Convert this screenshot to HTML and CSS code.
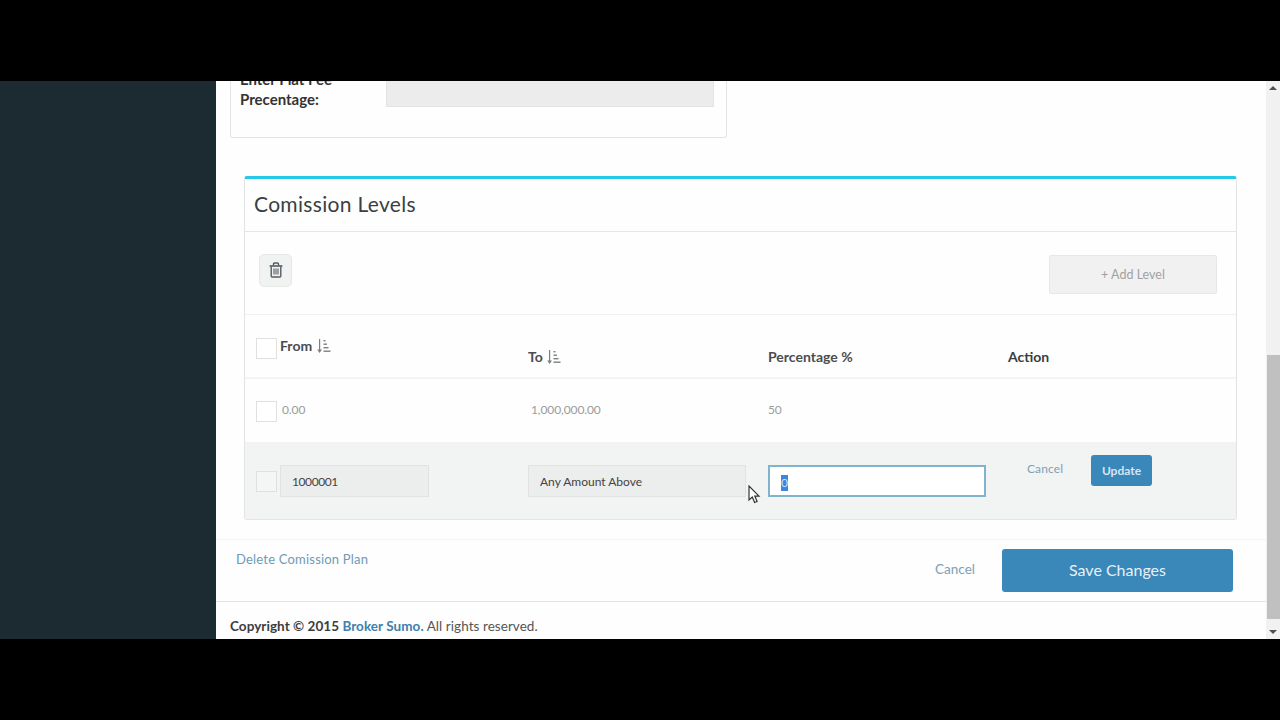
FILE: index.html
```html
<!DOCTYPE html>
<html lang="en">
<head>
<meta charset="utf-8">
<title>Comission Levels</title>
<link rel="stylesheet" href="styles.css">
</head>
<body>
<div class="app">
  <aside class="sidebar"></aside>
  <main class="main">
    <section class="plan-card">
      <div class="plan-label">Enter Flat Fee Precentage:</div>
      <div class="plan-input"></div>
    </section>

    <section class="panel">
      <h2 class="panel-title">Comission Levels</h2>
      <div class="toolbar">
        <button class="trash-btn" aria-label="Delete">
          <svg width="14" height="16" viewBox="0 0 14 16" fill="none" stroke="#555c60" stroke-width="1.4">
            <path d="M2.2 4.5V14a1 1 0 0 0 1 1h7.6a1 1 0 0 0 1-1V4.5"/>
            <path d="M.6 4h12.8" stroke-width="1.6"/>
            <path d="M4.5 3.6V2.2c0-.7.5-1.2 1.1-1.2h2.8c.6 0 1.100.5 1.100 1.200v1.400"/>
            <path d="M5 6.500v6M7 6.500v6M9 6.500v6" stroke-width="1.100"/>
          </svg>
        </button>
        <button class="add-btn">+ Add Level</button>
      </div>

      <div class="row head-row">
        <div class="cell from-head">
          <span class="check"></span>
          <span class="from-text">From
            <svg class="sort" width="14" height="14" viewBox="0 0 14 14" fill="#7d8082"><path d="M2 0h1.200v10.500H5L2.600 14 .2 10.500H2z"/><rect x="6.500" y="1" width="2" height="1.400"/><rect x="6.500" y="4.500" width="3.500" height="1.400"/><rect x="6.500" y="8" width="5" height="1.400"/><rect x="6.500" y="11.500" width="7" height="1.400"/></svg>
          </span>
        </div>
        <div class="cell">To
          <svg class="sort" width="14" height="14" viewBox="0 0 14 14" fill="#7d8082"><path d="M2 0h1.200v10.500H5L2.600 14 .2 10.500H2z"/><rect x="6.500" y="1" width="2" height="1.400"/><rect x="6.500" y="4.500" width="3.500" height="1.400"/><rect x="6.500" y="8" width="5" height="1.400"/><rect x="6.500" y="11.500" width="7" height="1.400"/></svg>
        </div>
        <div class="cell">Percentage %</div>
        <div class="cell">Action</div>
      </div>

      <div class="row data-row">
        <div class="cell check-cell"><span class="check"></span><span class="from-val">0.00</span></div>
        <div class="cell to-val">1,000,000.00</div>
        <div class="cell">50</div>
        <div class="cell"></div>
      </div>

      <div class="row edit-row">
        <div class="cell check-cell"><span class="check"></span><div class="field from-field">1000001</div></div>
        <div class="cell"><div class="field to-field">Any Amount Above</div></div>
        <div class="cell"><div class="field pct-field"><span class="selected">0</span></div></div>
        <div class="cell actions">
          <a class="cancel-small">Cancel</a>
          <button class="update-btn">Update</button>
        </div>
      </div>
    </section>

    <div class="form-actions">
      <a class="delete-link">Delete Comission Plan</a>
      <div class="form-right">
        <a class="cancel-link">Cancel</a>
        <button class="save-btn">Save Changes</button>
      </div>
    </div>

    <footer class="footer">
      <b>Copyright © 2015 <span class="brand">Broker Sumo.</span></b> All rights reserved.
    </footer>
  </main>
  <div class="scrollbar">
    <div class="arrow up"></div>
    <div class="track"><div class="thumb"></div></div>
    <div class="arrow down"></div>
  </div>
</div>
<svg class="cursor" width="14" height="20" viewBox="0 0 14 20"><path d="M1 1v14l3.300-3 2.300 5.500 2.500-1-2.300-5.400H11z" fill="#fff" stroke="#333" stroke-width="1.200"/></svg>
</body>
</html>
```
FILE: styles.css
```css
* { box-sizing: border-box; }
html, body { margin: 0; height: 720px; overflow: hidden; background: #000; }
body { padding-top: 81px; font-family: "Lato", "Liberation Sans", sans-serif; font-size: 13px; color: #333; position: relative; }
.app { display: flex; height: 558px; background: #fdfefd; overflow: hidden; }
.sidebar { width: 216px; flex: none; background: #1c2a31; }
.main { width: 1050px; flex: none; overflow: hidden; }

.plan-card { display: flex; margin: -40px 0 0 14px; width: 497px; height: 97px; border: 1px solid #e3e5e5; border-top: 0; border-radius: 0 0 3px 3px; padding: 28px 12px 0 9px; }
.plan-label { width: 146px; font-size: 15px; font-weight: 700; line-height: 20px; color: #333; }
.plan-input { width: 328px; height: 39px; margin-top: -1px; background: #ebeceb; border: 1px solid #e2e3e2; }

.panel { margin: 38px 29px 0 28px; height: 344px; width: 993px; border: 1px solid #e3e5e5; border-top: 3px solid #25c8e6; border-radius: 3px; display: flex; flex-direction: column; }
.panel-title { margin: 0; height: 53px; padding: 0 9px; font-size: 21px; font-weight: 400; letter-spacing: .32px; line-height: 50px; color: #3a3f42; border-bottom: 1px solid #e5e7e7; }
.toolbar { height: 83px; display: flex; justify-content: space-between; align-items: flex-start; padding: 22px 19px 0 14px; border-bottom: 1px solid #eef0f0; }
.trash-btn { width: 33px; height: 33px; display: flex; align-items: center; justify-content: center; padding: 0; background: #f1f2f2; border: 1px solid #e6e7e7; border-radius: 5px; }
.add-btn { width: 168px; height: 39px; margin-top: 1px; font: 400 12.500px "Lato", sans-serif; color: #a0a2a2; background: #f0f1f0; border: 1px solid #e6e7e6; border-radius: 2px; }

.row { display: grid; grid-template-columns: 272px 240px 240px 1fr; padding-left: 11px; }
.head-row { height: 65px; font-size: 14px; font-weight: 700; color: #4a4d4f; border-bottom: 2px solid #f3f4f4; padding-top: 23px; }
.head-row .cell { padding-top: 10px; }
.head-row .cell:nth-child(4) { color: #3a3d3f; }
.head-row .from-head { display: flex; align-items: flex-start; gap: 3px; padding-top: 0; }
.from-text { line-height: 16px; }
.sort { vertical-align: -2px; margin-left: 1px; }

.check { display: block; width: 21px; height: 21px; flex: none; background: #fff; border: 1px solid #dfe1e1; }

.data-row { height: 63px; padding-bottom: 3px; align-items: center; font-size: 12px; color: #9a9c9c; letter-spacing: -.1px; }
.check-cell { display: flex; align-items: center; gap: 3px; }
.from-val { padding-left: 2px; }
.to-val { padding-left: 3px; }
.data-row .check { margin-top: 5px; }

.edit-row { height: 77px; background: #f2f4f4; padding-top: 23px; font-size: 12px; }
.edit-row .check-cell { align-items: flex-start; }
.edit-row .check { background: #f4f5f5; margin-top: 6px; }
.field { height: 32px; line-height: 31px; padding-left: 11px; color: #444; background: #eceded; border: 1px solid #e1e3e3; }
.from-field { width: 149px; letter-spacing: -.4px; }
.to-field { width: 218px; }
.pct-field { width: 218px; background: #fff; border: 2px solid #7fb4cc; padding-left: 11px; }
.selected { display: inline-block; height: 16px; line-height: 16px; background: #3b86e0; color: #cfe0f5; vertical-align: middle; margin-top: -2px; }
.actions { display: flex; align-items: flex-start; margin-top: -10px; padding-left: 19px; }
.cancel-small { width: 64px; padding-top: 6px; color: #7fa0b5; letter-spacing: .1px; }
.update-btn { width: 61px; height: 31px; padding: 0; font: 700 12px "Lato", sans-serif; color: #d5e6f2; background: #3a87ba; border: 0; border-radius: 3px; }

.form-actions { display: flex; justify-content: space-between; align-items: flex-start; height: 62px; margin: 19px 0 0 0; padding: 9px 33px 0 20px; border-top: 1px solid #f3f5f5; }
.delete-link { margin-top: 2px; font-size: 13px; letter-spacing: .2px; color: #6f9ab8; }
.form-right { display: flex; align-items: flex-start; }
.cancel-link { margin: 12px 27px 0 0; font-size: 13.500px; color: #7fa0b5; }
.save-btn { width: 231px; height: 43px; padding: 0 0 2px; font: 400 16px "Lato", sans-serif; color: #e6f0f7; background: #3a87ba; border: 0; border-radius: 3px; }

.footer { padding: 16px 0 0 14px; font-size: 13.500px; letter-spacing: .05px; color: #555; border-top: 1px solid #e3e5e5; }
.footer b { color: #3a3d3f; }
.brand { color: #3f7fae; }

.scrollbar { width: 14px; flex: none; display: flex; flex-direction: column; background: #f1f1f1; }
.arrow { height: 14px; flex: none; display: flex; align-items: center; justify-content: center; }
.arrow::before { content: ""; border-left: 4px solid transparent; border-right: 4px solid transparent; }
.up::before { border-bottom: 4px solid #505050; }
.down::before { border-top: 4px solid #505050; }
.track { flex: 1; padding-top: 260px; }
.thumb { height: 264px; margin-left: 1px; background: #bfc0bf; }

.cursor { position: absolute; left: 748px; top: 485px; }
```
